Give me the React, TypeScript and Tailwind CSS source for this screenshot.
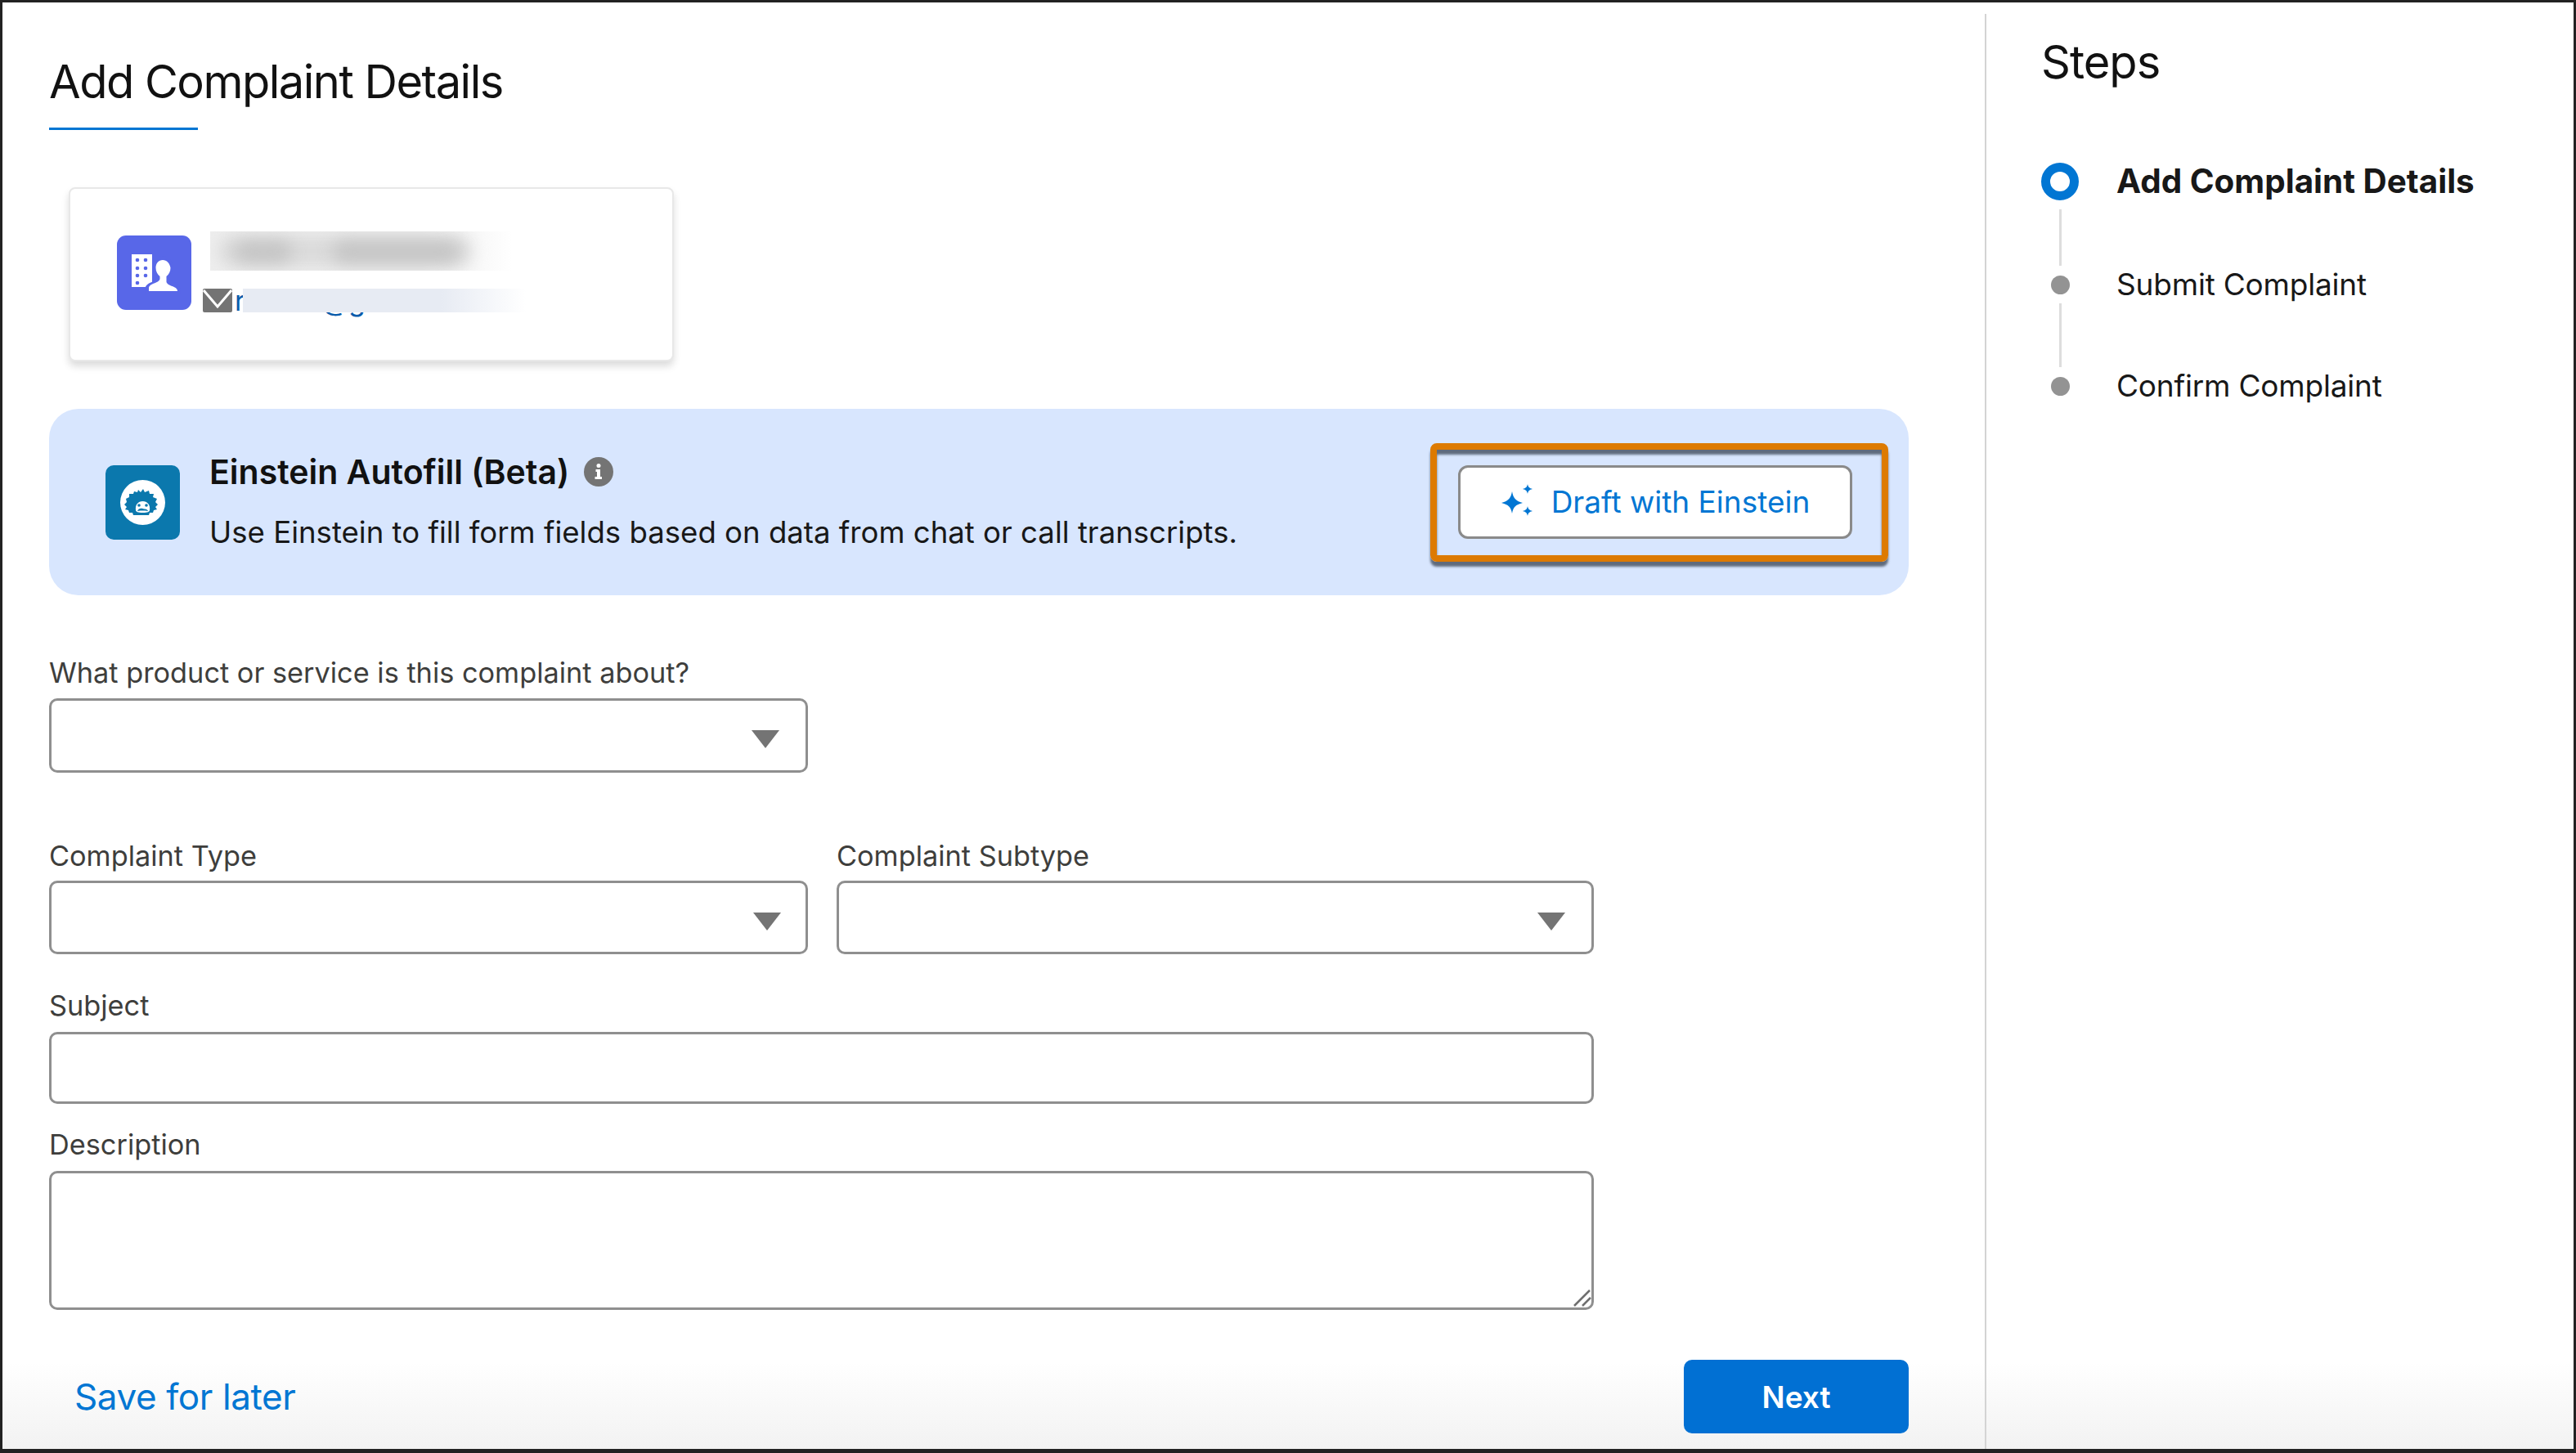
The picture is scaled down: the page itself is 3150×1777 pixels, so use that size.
function Triangle() {
  return (
    <svg width="34" height="22" viewBox="0 0 34 22" className="mt-[9px] shrink-0">
      <path d="M0 0H34L17 22Z" fill="#747474" />
    </svg>
  );
}

function SelectField({ label, pr, mt, height, className }: { label: string; pr: string; mt: string; height: string; className: string }) {
  return (
    <div className={className}>
      <label className="block h-[40px] text-[34.3px] leading-[40px] text-[#3e3e3c]">{label}</label>
      <div className={`flex items-center justify-end rounded-[10px] border-[3px] border-[#8f8f8f] bg-white ${pr} ${mt} ${height}`}>
        <Triangle />
      </div>
    </div>
  );
}

function AccountIcon() {
  return (
    <svg width="91" height="91" viewBox="0 0 91 91" className="shrink-0">
      <rect width="91" height="91" rx="11" fill="#5867e8" />
      <rect x="18" y="23" width="25" height="40" fill="#fff" />
      {[25, 35].map((x) =>
        [30, 40, 49, 58].map((y) =>
          x === 35 && y === 58 ? null : <circle key={`${x}-${y}`} cx={x} cy={y} r="2.3" fill="#5867e8" />,
        ),
      )}
      <path
        d="M56 25c-7.5 0-12.500 6-12.500 14 0 5 2 9 5 12 0 3-2 4-6 6-5 2-8 4-8 9v5h43v-5c0-5-3-7-8-9-4-2-6-3-6-6 3-3 5-7 5-12 0-8-5-14-12.500-14Z"
        fill="#5867e8"
      />
      <path
        d="M56 30c-5 0-8.500 4-8.500 9.500 0 4.500 2 8 5 10.500v3c0 2-3 4-7 5.500-4 1.500-6.500 3-6.500 6v3.500h35V68c0-3-2.500-4.500-6.500-6-4-1.500-7-3.500-7-5.500v-6.500c3-2.500 5-6 5-10.500C64.500 34 61 30 56 30Z"
        fill="#fff"
      />
    </svg>
  );
}

function MailIcon() {
  return (
    <svg width="36" height="29" viewBox="0 0 36 29" className="shrink-0">
      <rect width="36" height="29" rx="2" fill="#747474" />
      <path d="M1 2 18 22 35 2" fill="none" stroke="#fff" strokeWidth="3" />
    </svg>
  );
}

function EinsteinIcon() {
  return (
    <svg width="91" height="91" viewBox="0 0 91 91" className="shrink-0">
      <rect width="91" height="91" rx="10" fill="#0b78ad" />
      <circle cx="45.500" cy="45.500" r="27.500" fill="#fff" />
      <path
        d="M40 30l3 3 3-4 2 4 5-2 1 4 5 0-1 4 5 2-2 4 3 3-3 3 2 3-4 1-1 3-4 0-1 3H34l-1-3-4 0-1-3-4-1 2-3-3-3 3-3-1-4 4-2 0-4 5 0 1-3 4 1Z"
        fill="#0b78ad"
      />
      <path d="M37 55c-1-7 3-11 8.500-11S55 48 54 55c-.500 2-2 3-8.500 3S37.500 57 37 55Z" fill="#fff" />
      <circle cx="41" cy="49" r="1.800" fill="#0b78ad" />
      <circle cx="50" cy="49" r="1.800" fill="#0b78ad" />
      <path d="M39 56c1-3 4-4 6.500-3s5.500 0 6.500 3l-3.500-.5h-6Z" fill="#0b78ad" />
    </svg>
  );
}

function SparkleIcon() {
  return (
    <svg width="40" height="44" viewBox="0 0 40 44" className="shrink-0">
      <path d="M14 9C15.500 17 18 20.500 27 23 18 25.500 15.500 28 14 36 12.500 28 10 25.500 1 23 10 20.500 12.500 17 14 9Z" fill="#0176d3" />
      <path d="M33 0C33.700 3.500 35 5 39 6 35 7 33.700 8.500 33 12 32.300 8.500 31 7 27 6 31 5 32.300 3.500 33 0Z" fill="#0176d3" />
      <path d="M33 27C33.700 30.500 35 32 39 33 35 34 33.700 35.500 33 39 32.300 35.500 31 34 27 33 31 32 32.300 30.500 33 27Z" fill="#0176d3" />
    </svg>
  );
}

function InfoIcon() {
  return (
    <svg width="36" height="36" viewBox="0 0 36 36" className="shrink-0">
      <circle cx="18" cy="18" r="18" fill="#747474" />
      <circle cx="18" cy="10.500" r="2.500" fill="#fff" />
      <path d="M14.500 15h5.500v9h2v3h-8.500v-3h2.500v-6h-1.500Z" fill="#fff" />
    </svg>
  );
}

function Step({ label, active, connector, last }: { label: string; active?: boolean; connector?: string; last?: boolean }) {
  return (
    <div className="flex gap-[46px]">
      <div className="flex w-[46px] flex-col items-center">
        <div className={`flex items-center ${active ? "h-[46px]" : "h-[24px]"}`}>
          {active ? (
            <div className="h-[46px] w-[46px] rounded-full border-[11px] border-[#0176d3] bg-white" />
          ) : (
            <div className="h-[23px] w-[23px] rounded-full bg-[#939393]" />
          )}
        </div>
        {!last && <div className={`my-[11px] w-[3px] bg-[#dddddd] ${connector}`} />}
      </div>
      <div
        className={`flex items-center whitespace-nowrap text-[#181818] ${
          active ? "h-[46px] text-[40.4px] font-bold" : "h-[24px] text-[37px] tracking-[-0.2px]"
        }`}
      >
        {label}
      </div>
    </div>
  );
}

export default function App() {
  return (
    <div className="flex h-[1777px] w-[3150px] border-x-[3px] border-t-[3px] border-b-[5px] border-[#222222] bg-[linear-gradient(to_bottom,#ffffff_94%,#f2f2f2_100%)] font-['Inter',sans-serif]">
      {/* Main form */}
      <div className="w-[2424px] shrink-0 pl-[57px] pr-[93px]">
        <h1 className="mt-[63px] h-[68px] text-[56px] leading-[68px] tracking-[-1.5px] text-[#111111]">Add Complaint Details</h1>
        <div className="mt-[22px] h-[3px] w-[182px] bg-[#0176d3]" />

        {/* Contact card */}
        <div className="ml-[24px] mt-[70px] h-[213px] w-[740px] rounded-[8px] border-2 border-[#e8e8e8] bg-white pl-[57px] pt-[57px] shadow-[0_6px_10px_rgba(0,0,0,0.14)]">
          <div className="flex items-start">
            <AccountIcon />
            <div className="relative w-[400px]">
              <div className="relative ml-[23px] mt-[-5px] h-[48px] w-[370px] overflow-hidden bg-[linear-gradient(to_right,#eeeeee_70%,#ffffff_100%)]">
                <div className="absolute left-[10px] top-[6px] h-[36px] w-[310px] rounded-full bg-[#dadada] blur-[10px]" />
                <div className="absolute left-[30px] top-[12px] h-[26px] w-[70px] rounded-full bg-[#c4c4c4] blur-[10px]" />
                <div className="absolute left-[150px] top-[12px] h-[26px] w-[155px] rounded-full bg-[#c4c4c4] blur-[10px]" />
              </div>
              <div className="mt-[22px] flex items-center pl-[14px]">
                <MailIcon />
                <span className="ml-[3px] h-[29px] text-[34px] leading-[29px] text-[#0b5cab]">rxxxxx@gmail</span>
              </div>
              <div className="absolute left-[63px] top-[65px] h-[29px] w-[346px] bg-[linear-gradient(to_right,#e7ebf3_70%,#ffffff_100%)]" />
            </div>
          </div>
        </div>

        {/* Einstein banner */}
        <div className="mt-[58px] flex h-[228px] items-center justify-between rounded-[36px] bg-[#d8e6fe] pl-[69px] pr-[25px]">
          <div className="flex items-center gap-[36px]">
            <EinsteinIcon />
            <div className="flex flex-col gap-[26px]">
              <div className="flex h-[48px] items-center gap-[18px]">
                <span className="text-[41px] font-semibold leading-[48px] text-[#111111]">Einstein Autofill (Beta)</span>
                <InfoIcon />
              </div>
              <p className="h-[48px] text-[36.6px] leading-[48px] text-[#181818]">
                Use Einstein to fill form fields based on data from chat or call transcripts.
              </p>
            </div>
          </div>
          <div className="flex h-[145px] w-[560px] items-center justify-center rounded-[8px] border-[8px] border-[#dd7a01] shadow-[0_6px_3px_#5f6b7d,inset_0_6px_3px_#5f6b7d]">
            <button className="mb-[1px] mr-[10px] flex h-[90px] w-[482px] items-center justify-center gap-[22px] rounded-[12px] border-[3px] border-[#8a8a8a] bg-white text-[37px] text-[#0176d3]">
              <SparkleIcon />
              Draft with Einstein
            </button>
          </div>
        </div>

        {/* Form fields */}
        <SelectField
          className="mt-[75px] w-[928px]"
          label="What product or service is this complaint about?"
          pr="pr-[32px]"
          mt="mt-[11px]"
          height="h-[91px]"
        />
        <div className="mt-[82px] flex w-[1889px] gap-[35px]">
          <SelectField className="w-[928px]" label="Complaint Type" pr="pr-[30px]" mt="mt-[10px]" height="h-[90px]" />
          <SelectField className="w-[926px]" label="Complaint Subtype" pr="pr-[32px]" mt="mt-[10px]" height="h-[90px]" />
        </div>

        <label className="mt-[43px] block h-[40px] text-[34.3px] leading-[40px] text-[#3e3e3c]">Subject</label>
        <input className="mt-[12px] block h-[88px] w-[1889px] rounded-[10px] border-[3px] border-[#8f8f8f] bg-white" />

        <label className="mt-[30px] block h-[40px] text-[34.3px] leading-[40px] text-[#3e3e3c]">Description</label>
        <div className="relative mt-[12px] h-[170px] w-[1889px]">
          <textarea className="block h-full w-full resize-none rounded-[10px] border-[3px] border-[#8f8f8f] bg-white" />
          <svg width="22" height="22" viewBox="0 0 22 22" className="absolute bottom-[4px] right-[3px]">
            <path d="M1 21 20 2M11 21 21 11" stroke="#6f6f6f" strokeWidth="2.500" fill="none" />
          </svg>
        </div>

        <div className="mt-[61px] flex items-center justify-between">
          <a className="ml-[31px] text-[44px] tracking-[-0.4px] text-[#0176d3]">Save for later</a>
          <button className="h-[90px] w-[275px] rounded-[10px] bg-[#0170d3] pt-[2px] text-[37px] font-semibold text-white">Next</button>
        </div>
      </div>

      {/* Steps sidebar */}
      <div className="mt-[14px] flex-1 border-l-[2px] border-[#d4d4d4] pl-[67px] pt-[25px]">
        <h2 className="h-[68px] text-[56px] leading-[68px] tracking-[-1px] text-[#111111]">Steps</h2>
        <div className="mt-[89px]">
          <Step label="Add Complaint Details" active connector="h-[69px]" />
          <Step label="Submit Complaint" connector="h-[78px]" />
          <Step label="Confirm Complaint" last />
        </div>
      </div>
    </div>
  );
}
